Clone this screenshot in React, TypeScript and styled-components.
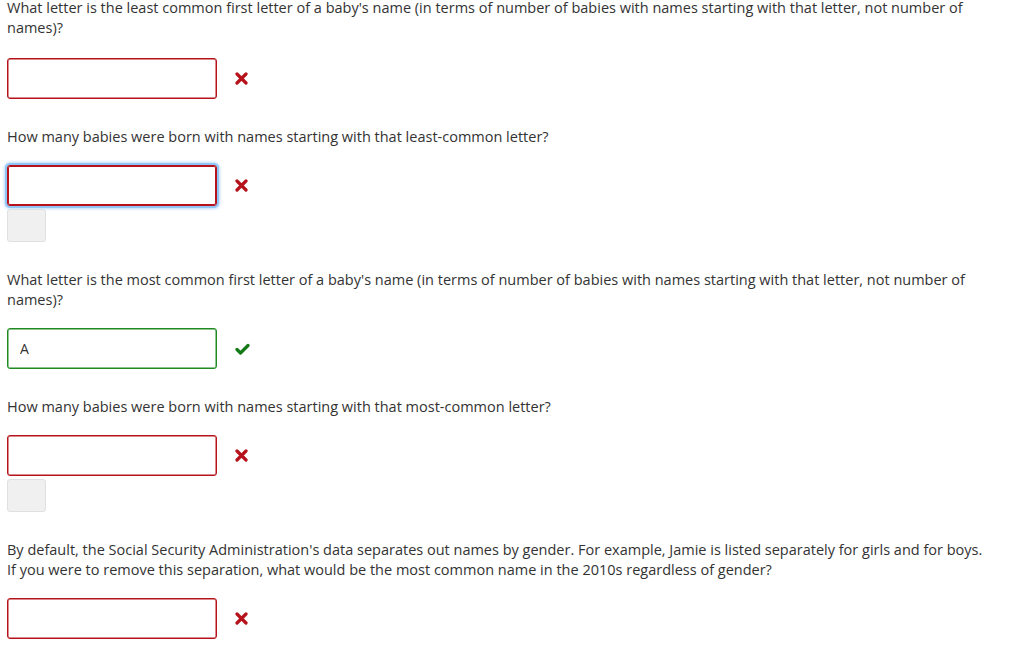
import React from 'react';
import styled, { createGlobalStyle } from 'styled-components';

const GlobalStyle = createGlobalStyle`
    body {
        margin: 0;
        background: #fff;
        font-family: 'Open Sans', 'Liberation Sans', sans-serif;
        font-size: 14.5px;
        color: #333;
    }
`;

type Status = 'wrong' | 'right';

type Question = {
    prompt: string;
    status: Status;
    value?: string;
    focused?: boolean;
    retry?: boolean;
};

const questions: Question[] = [
    {
        prompt: "What letter is the least common first letter of a baby's name (in terms of number of babies with names starting with that letter, not number of names)?",
        status: 'wrong',
    },
    {
        prompt: 'How many babies were born with names starting with that least-common letter?',
        status: 'wrong',
        focused: true,
        retry: true,
    },
    {
        prompt: "What letter is the most common first letter of a baby's name (in terms of number of babies with names starting with that letter, not number of names)?",
        status: 'right',
        value: 'A',
    },
    {
        prompt: 'How many babies were born with names starting with that most-common letter?',
        status: 'wrong',
        retry: true,
    },
    {
        prompt: "By default, the Social Security Administration's data separates out names by gender. For example, Jamie is listed separately for girls and for boys. If you were to remove this separation, what would be the most common name in the 2010s regardless of gender?",
        status: 'wrong',
    },
];

const CrossIcon = () => (
    <svg width="13" height="13" viewBox="0 0 13 13">
        <path d="M2 2 L11 11 M11 2 L2 11" stroke="currentColor" strokeWidth="3.2" strokeLinecap="round" />
    </svg>
);

const CheckIcon = () => (
    <svg width="15" height="12" viewBox="0 0 15 12">
        <path d="M2 6.5 L5.5 10 L13 2.5" fill="none" stroke="currentColor" strokeWidth="3.2" strokeLinecap="round" strokeLinejoin="round" />
    </svg>
);

const App = () => {
    return (
        <>
            <GlobalStyle />
            <Page>
                {questions.map((q, i) => (
                    <Block key={i}>
                        <Prompt first={i === 0}>{q.prompt}</Prompt>
                        <AnswerRow>
                            <AnswerInput
                                status={q.status}
                                focused={q.focused}
                                defaultValue={q.value ?? ''}
                                readOnly
                            />
                            <Mark status={q.status}>{q.status === 'right' ? <CheckIcon /> : <CrossIcon />}</Mark>
                        </AnswerRow>
                        {q.retry && <RetryButton />}
                    </Block>
                ))}
            </Page>
        </>
    );
};

export default App;

const Page = styled.div`
    padding: 0 7px;
    width: 982px;
    display: flex;
    flex-direction: column;
    gap: 30px;
`;

const Block = styled.div`
    display: flex;
    flex-direction: column;
    align-items: flex-start;
`;

const Prompt = styled.p<{ first?: boolean }>`
    margin: -2px 0 ${(p) => (p.first ? '20px' : '18px')} 0;
    line-height: 20px;
`;

const AnswerRow = styled.div`
    display: flex;
    align-items: center;
`;

const AnswerInput = styled.input<{ status: Status; focused?: boolean }>`
    box-sizing: border-box;
    width: 210px;
    height: 41px;
    padding: 0 12px;
    font-family: inherit;
    font-size: 14px;
    color: #333;
    background: #fff;
    border: 1px solid ${(p) => (p.status === 'right' ? '#1f8a1f' : '#b5121b')};
    border-radius: 3px;
    outline: none;
    box-shadow: ${(p) =>
        p.focused
            ? 'inset 0 0 0 1px #b5121b, 0 0 0 2px #8fc4f5, 0 0 3px 3px rgba(143, 196, 245, 0.6)'
            : 'inset 0 0 0 0.5px ' + (p.status === 'right' ? '#1f8a1f' : '#b5121b')};
`;

const Mark = styled.span<{ status: Status }>`
    display: flex;
    margin-left: 18px;
    color: ${(p) => (p.status === 'right' ? '#137a17' : '#b5121b')};
`;

const RetryButton = styled.div`
    margin-top: 3px;
    width: 39px;
    height: 33px;
    box-sizing: border-box;
    background: #f0f0f0;
    border: 1px solid #e0e0e0;
    border-radius: 3px;
`;
